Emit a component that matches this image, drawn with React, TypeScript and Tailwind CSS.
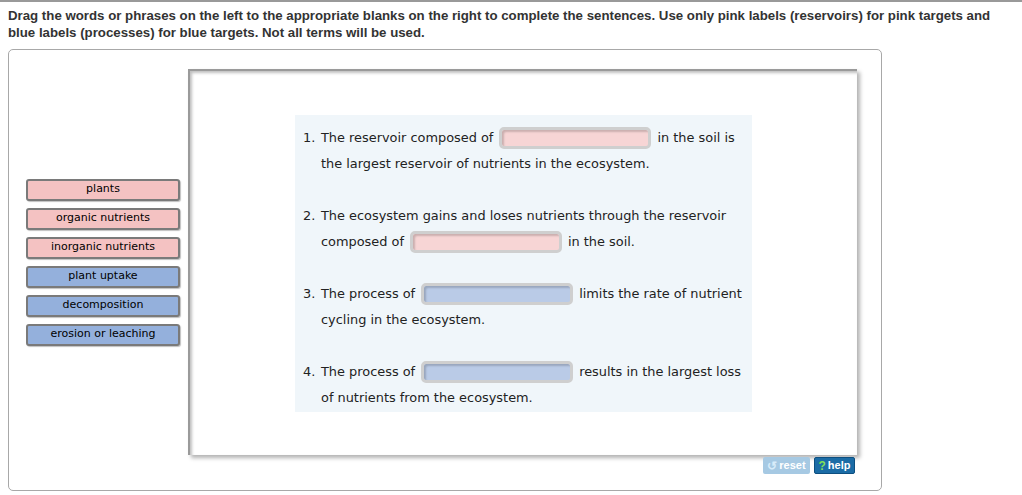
import React from "react";

const Pink = () => (
  <span className="inline-block align-middle mx-[6px] w-[152px] h-[22px] rounded-[5px] border-[3px] border-[#cfcfcf] bg-[#f7d5d5] shadow-[inset_2px_2px_2px_rgba(0,0,0,0.18)]" />
);
const Blue = () => (
  <span className="inline-block align-middle mx-[6px] w-[152px] h-[22px] rounded-[5px] border-[3px] border-[#cfcfcf] bg-[#bacbe7] shadow-[inset_2px_2px_2px_rgba(0,0,0,0.18)]" />
);

const Label = ({ text, pink }: { text: string; pink: boolean }) => (
  <div
    className={`h-[22px] w-[154px] rounded-[3px] border-2 border-[#7a7a7a] flex items-center justify-center text-[#000] shadow-[1px_1px_1px_rgba(0,0,0,0.25)] ${
      pink ? "bg-[#f4c2c2]" : "bg-[#94b0dc]"
    }`}
    style={{ fontFamily: "Tahoma, 'DejaVu Sans', sans-serif", fontSize: "11px" }}
  >
    {text}
  </div>
);

export default function App() {
  const labels: [string, boolean][] = [
    ["plants", true],
    ["organic nutrients", true],
    ["inorganic nutrients", true],
    ["plant uptake", false],
    ["decomposition", false],
    ["erosion or leaching", false],
  ];
  return (
    <div className="w-[1022px] h-[495px] bg-white overflow-hidden border-t-2 border-[#999]">
      <div
        className="px-2 pt-[5px] text-[13.25px] leading-[17px] font-bold text-[#333]"
        style={{ fontFamily: "'Liberation Sans', Arial, sans-serif" }}
      >
        Drag the words or phrases on the left to the appropriate blanks on the right to complete the sentences. Use only pink labels (reservoirs) for pink targets and
        <br />
        blue labels (processes) for blue targets. Not all terms will be used.
      </div>
      <div className="ml-2 mt-[8px] w-[874px] h-[442px] rounded-[5px] border border-[#a8a8a8] relative">
        <div className="flex flex-row pt-[19px]">
          <div className="w-[179px] pl-[17px] flex flex-col justify-center gap-[7px]">
            {labels.map(([t, p]) => (
              <Label key={t} text={t} pink={p} />
            ))}
          </div>
          <div className="w-[669px] h-[386px] bg-white flex items-center justify-center border-l-[2px] border-t-[2px] border-[#9a9a9a] shadow-[inset_2px_2px_3px_rgba(0,0,0,0.25),3px_3px_4px_rgba(0,0,0,0.3)]">
            <div
              className="w-[457px] h-[297px] bg-[#f0f6fa] pl-[8px] pt-[10px] flex flex-col gap-[26px] text-[12.9px] leading-[26px] text-[#222]"
              style={{ fontFamily: "'DejaVu Sans', Verdana, sans-serif" }}
            >
              <div>
                <div className="flex items-center whitespace-nowrap">
                  <span className="w-[18px]">1.</span>The reservoir composed of<Pink />in the soil is
                </div>
                <div className="pl-[18px] whitespace-nowrap">the largest reservoir of nutrients in the ecosystem.</div>
              </div>
              <div>
                <div className="flex items-center whitespace-nowrap">
                  <span className="w-[18px]">2.</span>The ecosystem gains and loses nutrients through the reservoir
                </div>
                <div className="pl-[18px] flex items-center whitespace-nowrap">
                  composed of<Pink />in the soil.
                </div>
              </div>
              <div>
                <div className="flex items-center whitespace-nowrap">
                  <span className="w-[18px]">3.</span>The process of<Blue />limits the rate of nutrient
                </div>
                <div className="pl-[18px] whitespace-nowrap">cycling in the ecosystem.</div>
              </div>
              <div>
                <div className="flex items-center whitespace-nowrap">
                  <span className="w-[18px]">4.</span>The process of<Blue />results in the largest loss
                </div>
                <div className="pl-[18px] whitespace-nowrap">of nutrients from the ecosystem.</div>
              </div>
            </div>
          </div>
        </div>
        <div
          className="flex justify-end gap-[4px] pr-[26px] mt-[2px] text-[11px] font-bold text-white"
          style={{ fontFamily: "'Liberation Sans', Arial, sans-serif" }}
        >
          <div className="h-[17px] w-[47px] bg-[#a6c9e3] rounded-[2px] flex items-center justify-center gap-[2px]">
            <span className="text-[#d8ecfa] text-[12px]">↺</span>reset
          </div>
          <div className="h-[17px] w-[41px] bg-[#1b6ca6] rounded-[2px] flex items-center justify-center gap-[2px] border border-[#0d4f80]">
            <span className="text-[#7fe05a] text-[12px]">?</span>help
          </div>
        </div>
      </div>
    </div>
  );
}
